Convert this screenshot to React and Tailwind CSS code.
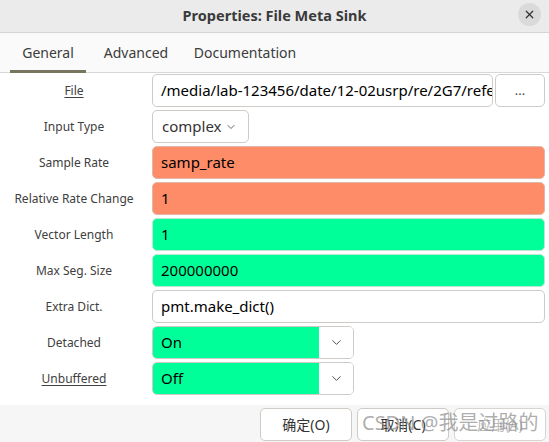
import { ChevronDown, X } from "lucide-react";

const sans = { fontFamily: '"Noto Sans", "DejaVu Sans", "Noto Sans CJK SC", sans-serif' };

const Label = ({ children, underline }) => (
  <div className="w-[148px] shrink-0 text-center text-[12px] text-[#404040]">
    <span className={underline ? "underline underline-offset-2" : ""}>{children}</span>
  </div>
);

const Entry = ({ value, color }) => (
  <div
    className={`flex-1 min-w-0 h-full rounded-[5px] border flex items-center px-[8px] text-[15px] text-black overflow-hidden whitespace-nowrap ${
      color === "salmon"
        ? "bg-[#ff8c69] border-[#e0b8aa]"
        : color === "green"
        ? "bg-[#00ff99] border-[#bde6d3]"
        : "bg-white border-[#cfcac5]"
    }`}
  >
    {value}
  </div>
);

const Toggle = ({ value }) => (
  <div className="w-[202px] h-full rounded-[5px] border border-[#cfcac5] flex overflow-hidden">
    <div className="w-[166px] bg-[#00ff99] flex items-center px-[8px] text-[15px] text-black">{value}</div>
    <div className="flex-1 bg-white flex items-center justify-center text-[#444]">
      <ChevronDown size={15} strokeWidth={1.5} />
    </div>
  </div>
);

const Row = ({ label, underline, children }) => (
  <div className="h-[33px] flex items-center pr-[4px]">
    <Label underline={underline}>{label}</Label>
    <div className="ml-[4px] flex-1 min-w-0 h-full flex">{children}</div>
  </div>
);

export default function App() {
  return (
    <div className="w-[549px] h-[442px] relative overflow-hidden bg-white flex flex-col" style={sans}>
      <div className="h-[33px] shrink-0 bg-[#ebebeb] border-b border-[#d4d4d4] flex items-center justify-center relative">
        <span className="text-[14.5px] font-bold text-[#3a3a3a]">Properties: File Meta Sink</span>
        <div className="absolute right-[8px] top-[3px] w-[23px] h-[23px] rounded-full bg-[#dadada] flex items-center justify-center text-[#333]">
          <X size={13} strokeWidth={2.2} />
        </div>
      </div>

      <div className="h-[40px] shrink-0 bg-[#fafafa] border-b border-[#d8d8d8] flex pl-[10px] text-[14px] text-[#3c3c3c]">
        <div className="relative h-full w-[76px] flex items-center justify-center">
          General
          <div className="absolute left-0 right-0 bottom-[-1px] h-[3px] bg-[#77755d]" />
        </div>
        <div className="h-full w-[100px] flex items-center justify-center">Advanced</div>
        <div className="h-full w-[118px] flex items-center justify-center">Documentation</div>
      </div>

      <div className="flex-1 flex flex-col gap-[3px] pt-[1px]">
        <Row label="File" underline>
          <Entry value="/media/lab-123456/date/12-02usrp/re/2G7/reference.bin" />
          <div className="ml-[2px] w-[50px] shrink-0 h-full rounded-[5px] border border-[#cfcac5] flex items-center justify-center text-[13px] text-[#444]">
            ...
          </div>
        </Row>
        <Row label="Input Type">
          <div className="w-[97px] h-full rounded-[5px] border border-[#cfcac5] flex items-center pl-[9px] gap-[3px] text-[15px] text-[#333]">
            complex
            <ChevronDown size={12} strokeWidth={1.5} />
          </div>
        </Row>
        <Row label="Sample Rate">
          <Entry value="samp_rate" color="salmon" />
        </Row>
        <Row label="Relative Rate Change">
          <Entry value="1" color="salmon" />
        </Row>
        <Row label="Vector Length">
          <Entry value="1" color="green" />
        </Row>
        <Row label="Max Seg. Size">
          <Entry value="200000000" color="green" />
        </Row>
        <Row label="Extra Dict.">
          <Entry value="pmt.make_dict()" />
        </Row>
        <Row label="Detached">
          <Toggle value="On" />
        </Row>
        <Row label="Unbuffered" underline>
          <Toggle value="Off" />
        </Row>
      </div>

      <div className="h-[37px] shrink-0 bg-[#f6f6f6] flex justify-end items-start pt-[3px] pr-[3px] gap-[5px]">
        <div className="w-[92px] h-[33px] rounded-[5px] border border-[#cfcac5] bg-white flex items-center justify-center text-[14px] text-[#333]">
          确定(O)
        </div>
        <div className="w-[92px] h-[33px] rounded-[5px] border border-[#cfcac5] bg-white flex items-center justify-center text-[14px] text-[#333]">
          取消(C)
        </div>
        <div className="w-[92px] h-[33px] rounded-[5px] border border-[#d8d4d0] bg-white flex items-center justify-center text-[14px] text-[#bbb]">
          应用(A)
        </div>
      </div>

      <div
        className="absolute left-[362px] top-[408px] text-[20px] text-[#8a8a8a]/70 whitespace-nowrap pointer-events-none"
        style={{ fontFamily: '"Noto Sans", "Noto Sans CJK SC", sans-serif' }}
      >
        CSDN @我是过路的
      </div>
    </div>
  );
}
